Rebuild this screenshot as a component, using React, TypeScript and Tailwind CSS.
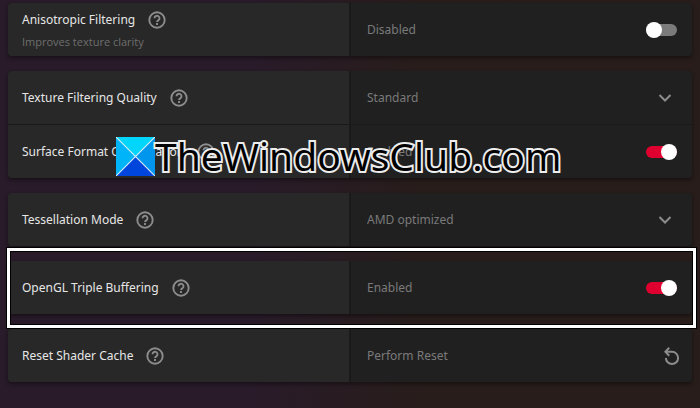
import { useId, useState } from 'react';
import type { ReactNode } from 'react';

const HelpIcon = () => {
    return (
        <svg viewBox="0 0 20 20" className="size-5" fill="none" stroke="currentColor" strokeWidth="1.900">
            <circle cx="10" cy="10" r="7.700" />
            <path d="M7.500 8.200a2.500 2.500 0 1 1 3.900 2.100c-.9.600-1.400.9-1.400 1.700" />
            <path d="M10 12.900v2" />
        </svg>
    );
};

const Row: React.FC<{ label: string; htmlFor: string; hint?: string; children: ReactNode }> = ({
    label,
    htmlFor,
    hint,
    children,
}) => {
    return (
        <div className="grid grid-cols-2 gap-0.5">
            <div className="flex flex-col justify-center gap-1 min-h-[53px] pl-3.5 bg-[#282828]">
                <div className="flex items-center gap-3">
                    <label htmlFor={htmlFor} className="text-xs leading-5 text-[#e6e6e6]">{label}</label>
                    <button type="button" aria-label={`About ${label}`} className="text-[#8c8c8c]">
                        <HelpIcon />
                    </button>
                </div>
                {hint && <p className="text-[11px] leading-4 text-[#6e6e6e] font-['Open_Sans',sans-serif]">{hint}</p>}
            </div>
            <div className="relative flex items-center justify-between pl-4 pr-[15px] bg-[#202020] text-xs leading-5 text-[#7a7a7a]">
                {children}
            </div>
        </div>
    );
};

const ToggleRow: React.FC<{ label: string; hint?: string; initial: boolean }> = ({ label, hint, initial }) => {
    const id = useId();
    const [on, setOn] = useState(initial);
    return (
        <Row label={label} htmlFor={id} hint={hint}>
            <span>{on ? 'Enabled' : 'Disabled'}</span>
            <input
                id={id}
                type="checkbox"
                role="switch"
                checked={on}
                onChange={(e) => setOn(e.target.checked)}
                className="appearance-none flex items-center w-[31px] h-3 rounded-full bg-[#7b7b7b] checked:bg-[#e0002f] before:size-4 before:shrink-0 before:rounded-full before:bg-white checked:before:ml-[15px]"
            />
        </Row>
    );
};

const SelectRow: React.FC<{ label: string; options: string[] }> = ({ label, options }) => {
    const id = useId();
    return (
        <Row label={label} htmlFor={id}>
            <select id={id} className="appearance-none flex-1 self-stretch bg-transparent outline-none">
                {options.map((option) => (
                    <option key={option}>{option}</option>
                ))}
            </select>
            <svg viewBox="0 0 14 14" className="absolute right-5 size-3.5 pointer-events-none" fill="none" stroke="#8c8c8c" strokeWidth="2">
                <path d="M1.5 4 7 9.5 12.500 4" />
            </svg>
        </Row>
    );
};

const Card: React.FC<{ children: ReactNode }> = ({ children }) => {
    return (
        <section className="flex flex-col gap-px overflow-hidden rounded-[4px] bg-[#1a1a1a] shadow-[0_2px_4px_rgba(0,0,0,0.45)]">
            {children}
        </section>
    );
};

const Watermark = () => {
    return (
        <div className="absolute left-[116px] top-[130px] flex items-center pointer-events-none">
            <svg viewBox="0 0 39 39" className="size-[39px]">
                <path d="M0 0h39L19.500 19.500z" fill="#00d5fb" />
                <path d="M0 0v39l19.500-19.500z" fill="#00b4fa" />
                <path d="M39 0v39L19.500 19.500z" fill="#0096ee" />
                <path d="M0 39h39L19.500 19.500z" fill="#0045dc" />
                <path d="M0 0l39 39M39 0 0 39" stroke="#d5ecf8" strokeWidth="1.200" />
            </svg>
            <span className="text-[39px] leading-[52px] text-black [-webkit-text-stroke:4px_#ededed] [paint-order:stroke_fill]">
                TheWindowsClub.com
            </span>
        </div>
    );
};

export default function App() {
    return (
        <main className="relative min-h-screen px-2 pt-[3px] pb-6 flex flex-col gap-[15px] bg-linear-to-r from-[#291b2a] from-35% to-[#281d1b] to-60% font-['Noto_Sans','Segoe_UI',sans-serif]">
            <Card>
                <ToggleRow label="Anisotropic Filtering" hint="Improves texture clarity" initial={false} />
            </Card>
            <Card>
                <SelectRow label="Texture Filtering Quality" options={['Standard', 'High', 'Performance']} />
                <ToggleRow label="Surface Format Optimization" initial={true} />
            </Card>
            <Card>
                <SelectRow label="Tessellation Mode" options={['AMD optimized', 'Override application settings']} />
            </Card>
            <div className="relative">
                <Card>
                    <ToggleRow label="OpenGL Triple Buffering" initial={true} />
                </Card>
                <div className="absolute -left-px -right-1 -top-[13px] -bottom-3.5 z-10 border-3 border-white outline outline-black shadow-[inset_0_0_0_1px_#000] pointer-events-none" />
            </div>
            <Card>
                <Row label="Reset Shader Cache" htmlFor="reset-cache">
                    <button id="reset-cache" type="button" className="flex flex-1 items-center justify-between -mr-[3px]">
                        Perform Reset
                        <svg viewBox="0 0 16 18" className="w-4 h-[18px]" fill="none" stroke="#8c8c8c" strokeWidth="2">
                            <path d="M1.500 4.800H8a6.100 6.100 0 1 1-6.100 6.100" />
                            <path d="M5.200.8 1.400 4.800l3.800 4" />
                        </svg>
                    </button>
                </Row>
            </Card>
            <Watermark />
        </main>
    );
}
